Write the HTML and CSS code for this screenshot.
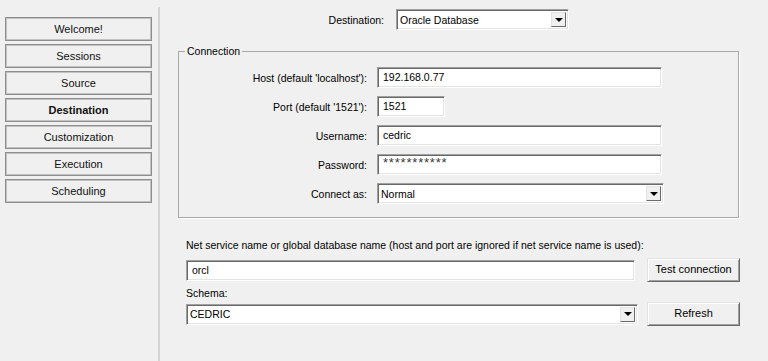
FILE: index.html
```html
<!DOCTYPE html>
<html lang="en">
<head>
    <meta charset="UTF-8">
    <meta name="viewport" content="width=device-width, initial-scale=1.0">
    <title>Destination</title>
    <link rel="stylesheet" href="styles.css">
</head>
<body>
    <div class="app">
        <nav class="steps">
            <div class="step-btn">Welcome!</div>
            <div class="step-btn">Sessions</div>
            <div class="step-btn">Source</div>
            <div class="step-btn active">Destination</div>
            <div class="step-btn">Customization</div>
            <div class="step-btn">Execution</div>
            <div class="step-btn">Scheduling</div>
        </nav>

        <main class="page">
            <div class="dest-row">
                <span class="dest-label">Destination:</span>
                <div class="combo dest-combo">
                    <span class="combo-text">Oracle Database</span>
                    <span class="combo-arrow"><span class="tri"></span></span>
                </div>
            </div>

            <div class="group">
                <span class="group-title">Connection</span>
                <div class="row">
                    <span class="row-label">Host (default 'localhost'):</span>
                    <div class="field wide">192.168.0.77</div>
                </div>
                <div class="row">
                    <span class="row-label">Port (default '1521'):</span>
                    <div class="field short">1521</div>
                </div>
                <div class="row">
                    <span class="row-label">Username:</span>
                    <div class="field wide">cedric</div>
                </div>
                <div class="row">
                    <span class="row-label">Password:</span>
                    <div class="field wide secret">***********</div>
                </div>
                <div class="row">
                    <span class="row-label">Connect as:</span>
                    <div class="combo conn-combo">
                        <span class="combo-text">Normal</span>
                        <span class="combo-arrow"><span class="tri"></span></span>
                    </div>
                </div>
            </div>

            <div class="service">
                <div class="plain-label">Net service name or global database name (host and port are ignored if net service name is used):</div>
                <div class="action-row">
                    <div class="field service-field">orcl</div>
                    <div class="push-btn">Test connection</div>
                </div>
                <div class="plain-label schema-label">Schema:</div>
                <div class="action-row schema-row">
                    <div class="combo schema-combo">
                        <span class="combo-text">CEDRIC</span>
                        <span class="combo-arrow"><span class="tri"></span></span>
                    </div>
                    <div class="push-btn">Refresh</div>
                </div>
            </div>
        </main>
    </div>
</body>
</html>
```

FILE: styles.css
```css
body {
    margin: 0;
    background: #f0f0f0;
    font-family: "Liberation Sans", Arial, sans-serif;
    font-size: 10.5px;
    color: #000;
}
.app {
    display: flex;
    width: 768px;
    height: 361px;
    overflow: hidden;
}
.steps {
    box-sizing: border-box;
    width: 160px;
    margin-top: 7px;
    padding: 10px 0 0 5px;
    border-right: 2px solid #d4d4d4;
    display: flex;
    flex-direction: column;
    gap: 3px;
}
.step-btn {
    box-sizing: border-box;
    width: 147px;
    height: 24px;
    line-height: 22px;
    text-align: center;
    border: 1px solid #8e8e8e;
    box-shadow: inset 0 0 0 1px #c2c2c2;
    font-size: 11px;
    color: #111;
}
.step-btn.active {
    font-weight: bold;
}
.page {
    flex: 1;
    padding: 9px 0 0 18px;
}
.dest-row {
    display: flex;
    align-items: center;
}
.dest-label {
    width: 206px;
    text-align: right;
    margin-right: 12px;
}
.combo {
    box-sizing: border-box;
    height: 21px;
    display: flex;
    align-items: center;
    background: #fff;
    border-top: 1px solid #a0a0a0;
    border-left: 1px solid #a0a0a0;
    border-right: 1px solid #fff;
    border-bottom: 1px solid #fff;
    box-shadow: inset 1px 1px 0 #696969, inset -1px -1px 0 #e3e3e3;
    padding: 0 2px 0 3px;
}
.combo-text {
    flex: 1;
}
.combo-arrow {
    box-sizing: border-box;
    width: 15px;
    height: 15px;
    background: #f0f0f0;
    border-top: 1px solid #e3e3e3;
    border-left: 1px solid #e3e3e3;
    border-right: 1px solid #696969;
    border-bottom: 1px solid #696969;
    display: flex;
    align-items: center;
    justify-content: center;
}
.tri {
    width: 0;
    height: 0;
    border-left: 4px solid transparent;
    border-right: 4px solid transparent;
    border-top: 4px solid #000;
}
.dest-combo {
    width: 173px;
}
.group {
    position: relative;
    box-sizing: border-box;
    width: 561px;
    margin-top: 21px;
    padding: 15px 0 13px;
    border: 1px solid #a8a8a8;
    box-shadow: 1px 1px 0 #fff;
    display: flex;
    flex-direction: column;
    gap: 8px;
}
.group-title {
    position: absolute;
    top: -7px;
    left: 6px;
    padding: 0 2px;
    background: #f0f0f0;
}
.row {
    display: flex;
    align-items: center;
}
.row-label {
    width: 188px;
    margin-right: 10px;
    text-align: right;
}
.field {
    box-sizing: border-box;
    height: 21px;
    line-height: 19px;
    padding: 0 5px;
    background: #fff;
    border-top: 1px solid #a0a0a0;
    border-left: 1px solid #a0a0a0;
    border-right: 1px solid #fff;
    border-bottom: 1px solid #fff;
    box-shadow: inset 1px 1px 0 #696969, inset -1px -1px 0 #e3e3e3;
}
.field.wide {
    width: 285px;
}
.field.short {
    width: 68px;
}
.field.secret {
    line-height: 15px;
    font-size: 13px;
    color: #3a3a3a;
    letter-spacing: 0.8px;
}
.conn-combo {
    width: 287px;
}
.service {
    margin-top: 21px;
    padding-left: 8px;
}
.plain-label {
    line-height: 13px;
}
.schema-label {
    margin-top: 5px;
}
.action-row {
    display: flex;
    align-items: center;
    margin-top: 6px;
}
.action-row.schema-row {
    margin-top: 2px;
}
.service-field {
    width: 449px;
    margin-right: 12px;
}
.schema-combo {
    width: 452px;
    margin-right: 9px;
}
.push-btn {
    box-sizing: border-box;
    width: 93px;
    height: 24px;
    line-height: 21px;
    text-align: center;
    font-size: 11px;
    background: #f0f0f0;
    border-top: 1px solid #e3e3e3;
    border-left: 1px solid #e3e3e3;
    border-right: 1px solid #696969;
    border-bottom: 1px solid #696969;
    box-shadow: inset 1px 1px 0 #fff, inset -1px -1px 0 #a0a0a0;
}
```
